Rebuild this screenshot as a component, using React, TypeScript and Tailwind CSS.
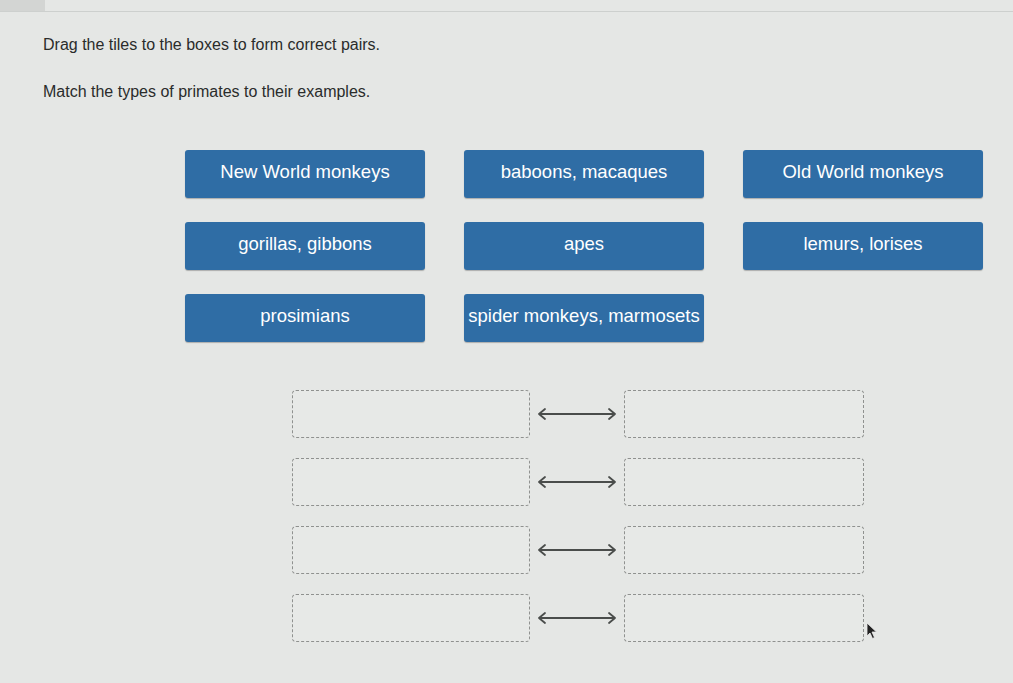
const TILE_ROWS: string[][] = [
  ['New World monkeys', 'baboons, macaques', 'Old World monkeys'],
  ['gorillas, gibbons', 'apes', 'lemurs, lorises'],
  ['prosimians', 'spider monkeys, marmosets'],
];

function Tile({ label }: { label: string }) {
  return (
    <div className="h-[48px] w-[240px] rounded-[3px] bg-[#2f6da5] shadow-[0_1px_1px_rgba(0,0,0,0.25)] flex items-center justify-center pb-[3px] text-white text-[18.5px] leading-none whitespace-nowrap">
      {label}
    </div>
  );
}

function DropBox({ wide }: { wide?: boolean }) {
  return (
    <div
      className={`h-[48px] ${wide ? 'w-[240px]' : 'w-[238px]'} rounded-[4px] border border-dashed border-[#8f918f] bg-[#e7e9e7]`}
    />
  );
}

function PairArrow() {
  return (
    <div className="w-[94px] flex items-center justify-center">
      <svg width="80" height="16" viewBox="0 0 80 16" fill="none">
        <path
          d="M2 8 H78 M8 3 L2 8 L8 13 M72 3 L78 8 L72 13"
          stroke="#4a4d4b"
          strokeWidth="1.8"
          strokeLinecap="round"
          strokeLinejoin="round"
        />
      </svg>
    </div>
  );
}

export default function App() {
  return (
    <div
      className="relative h-[683px] w-full overflow-hidden bg-[#e5e7e5] text-[#2a2c2b]"
      style={{ fontFamily: '"Liberation Sans", Arial, sans-serif' }}
    >
      <div className="h-3 flex border-b border-[#cdd0ce]">
        <div className="w-[45px] bg-[#d3d5d3]" />
      </div>

      <div className="pl-[43px] pt-[23px]">
        <p className="text-[16px] leading-[20px]">Drag the tiles to the boxes to form correct pairs.</p>
        <p className="mt-[27px] text-[16px] leading-[20px]">Match the types of primates to their examples.</p>
      </div>

      <div className="mt-[48px] pl-[185px] grid grid-cols-[240px_240px_240px] gap-x-[39px] gap-y-[24px]">
        {TILE_ROWS.flat().map(label => (
          <Tile key={label} label={label} />
        ))}
      </div>

      <div className="mt-[48px] pl-[292px] flex flex-col gap-[20px]">
        {[0, 1, 2, 3].map(i => (
          <div key={i} className="flex">
            <DropBox />
            <PairArrow />
            <DropBox wide />
          </div>
        ))}
      </div>

      <svg
        className="absolute left-[866px] top-[622px]"
        width="12"
        height="18"
        viewBox="0 0 12 18"
      >
        <path d="M1 1 L1 14 L4 11 L6.5 16.5 L8.5 15.5 L6 10 L10.5 10 Z" fill="#222" stroke="#eee" strokeWidth="0.8" />
      </svg>
    </div>
  );
}
